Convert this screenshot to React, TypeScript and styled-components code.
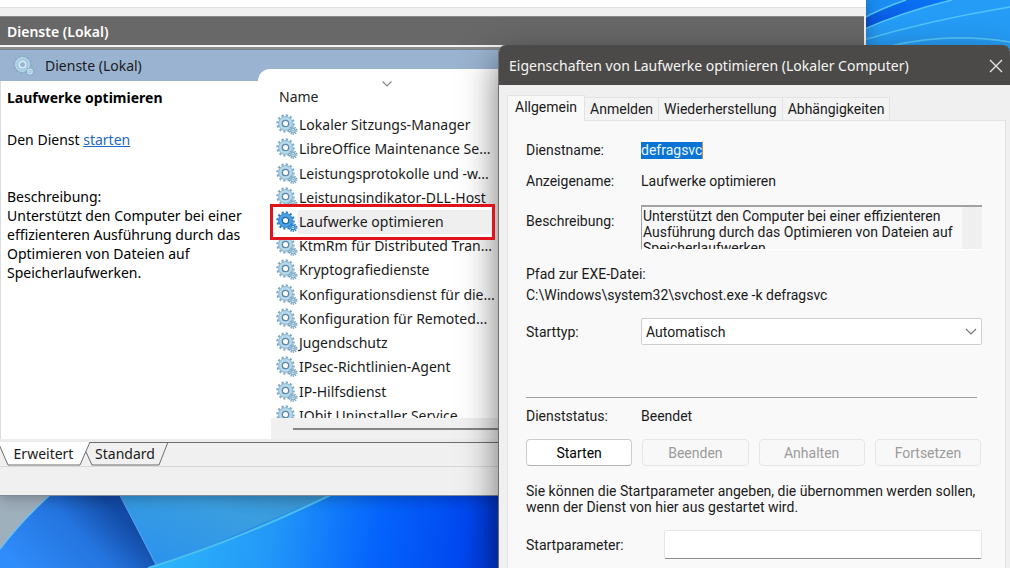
import React from 'react';
import styled, { createGlobalStyle } from 'styled-components';

const UI_FONT = '"Noto Sans", "Open Sans", sans-serif';
const DIALOG_FONT = 'Roboto, "Liberation Sans", sans-serif';

const GlobalStyle = createGlobalStyle`
  *, *::before, *::after { box-sizing: border-box; }
  body { margin: 0; font: 400 14px/20px ${UI_FONT}; color: #1a1a1a; }
  h1, h2, p, ul { margin: 0; padding: 0; font-size: 14px; }
  ul { list-style: none; }
  button, input, select, textarea { font: inherit; color: inherit; margin: 0; }
`;

const Desktop = styled.main`
  position: relative;
  min-height: 100vh;
  overflow: hidden;
  background: #2a8fe8;
`;

const WallpaperArt = styled.svg`
  position: absolute;
  inset: 0;
  width: 100%;
  height: 100%;
`;

/* ---------- services console ---------- */

const Console = styled.section`
  position: relative;
  margin-right: 144px;
  background: #f0f0f0;
  border-bottom: 1px solid #7f8a94;
  box-shadow: 0 2px 14px rgba(0, 0, 0, 0.3);
`;

const Toolbar = styled.div`
  height: 16px;
  border-top: 7px solid #fff;
  background: linear-gradient(#e0e0e0 1px, #f0f0f0 1px);
`;

const ConsoleTitle = styled.h1`
  margin-right: 2px;
  padding: 5px 7px 3px;
  border-top: 1px solid #8a8a8a;
  background: #686868;
  color: #fff;
  line-height: 20px;
  font-weight: 600;
`;

const Divider = styled.div`
  height: 5px;
  border-top: 2px solid #f4f4f4;
  border-bottom: 1px solid #7c8792;
  background: #8c8c88;
`;

const Panes = styled.div`
  display: grid;
  grid-template-columns: 258px 1fr;
  background: #9ab3d0;
`;

const InfoPane = styled.div`
  display: flex;
  flex-direction: column;
`;

const InfoHeader = styled.div`
  display: flex;
  align-items: center;
  gap: 10px;
  height: 31px;
  padding-left: 13px;
`;

const InfoBody = styled.div`
  display: flex;
  flex-direction: column;
  gap: 23px;
  flex: 1;
  padding: 7px 6px;
  border-left: 1px solid #dcdcdc;
  background: #fff;
  color: #000;
  line-height: 19px;
  white-space: nowrap;
`;

const InfoName = styled.h2`
  line-height: 19px;
  font-weight: 700;
`;

const Description = styled.p`
  margin-top: 15px;
`;

const StartLink = styled.a`
  color: #1c68c4;
`;

const ListPane = styled.div`
  margin-top: 19px;
  border-top-left-radius: 12px;
  background: #fff;
`;

const ColumnHeader = styled.div`
  display: flex;
  flex-direction: column;
  height: 44px;
  padding: 12px 0 0 21px;
  color: #222;
`;

const SortMark = styled.svg`
  width: 10px;
  height: 6px;
  margin-left: 103px;
`;

const ListViewport = styled.div`
  height: 305px;
  padding-left: 18px;
  overflow: hidden;
`;

const ServiceList = styled.ul`
  display: grid;
  grid-auto-rows: 1fr;
  width: 222px;
  height: 315px;
`;

const ServiceRow = styled.li<{ $selected?: boolean }>`
  position: relative;
  z-index: ${(p) => (p.$selected ? 1 : 0)};
  display: flex;
  align-items: center;
  white-space: nowrap;
`;

const ServiceName = styled.span<{ $selected?: boolean }>`
  flex: 1;
  margin-right: ${(p) => (p.$selected ? 6 : 0)}px;
  padding: 2px 1px;
  background: ${(p) => (p.$selected ? '#efefef' : 'transparent')};
`;

const Marker = styled.span`
  position: absolute;
  z-index: -1;
  inset: -6px 3px -6px -6px;
  border: 4px double #e0141c;
  border-style: solid;
  border-width: 3px;
  background: #fff;
`;

const ScrollTrack = styled.div`
  height: 21px;
  margin-left: 13px;
  padding: 10px 0 0 22px;
  background: #f0f0f0;
`;

const ScrollThumb = styled.div`
  height: 2px;
  background: #858585;
`;

const TabStrip = styled.div`
  display: flex;
  height: 28px;
  border-top: 3px solid #ececec;
  border-bottom: 1px solid #d9d9d9;
  background: linear-gradient(#6d6d6d 1px, #f0f0f0 1px);
`;

const ViewTab = styled.button<{ $width: number }>`
  position: relative;
  width: ${(p) => p.$width}px;
  height: 24px;
  margin-right: -6px;
  padding: 0 4px 0 0;
  border: 0;
  background: none;
`;

const TabShape = styled.svg`
  position: absolute;
  inset: 0;
`;

const TabText = styled.span`
  position: relative;
`;

const StatusBar = styled.div`
  height: 28px;
`;

/* ---------- properties dialog ---------- */

const Dialog = styled.section`
  position: absolute;
  top: 45px;
  right: 0;
  bottom: 0;
  left: 498px;
  border-left: 1px solid #6f6f6f;
  border-radius: 8px 8px 0 0;
  background: #f0f0f0;
  box-shadow: 0 14px 36px rgba(0, 0, 0, 0.55);
  font-family: ${DIALOG_FONT};
`;

const TitleBar = styled.header`
  display: flex;
  align-items: center;
  justify-content: space-between;
  height: 40px;
  padding: 2px 7px 0 10px;
  border-radius: 7px 7px 0 0;
  background: #4b4a48;
  color: #f5f5f5;
  font-family: ${UI_FONT};
  white-space: nowrap;
`;

const CloseButton = styled.button`
  display: flex;
  padding: 0;
  border: 0;
  background: none;
`;

const DialogTabs = styled.div`
  display: flex;
  align-items: flex-end;
  height: 35px;
  padding-left: 8px;
`;

const DialogTab = styled.button<{ $active?: boolean }>`
  position: relative;
  height: ${(p) => (p.$active ? 26 : 23)}px;
  margin-bottom: ${(p) => (p.$active ? -1 : 0)}px;
  padding: 0 ${(p) => (p.$active ? 7 : 5)}px ${(p) => (p.$active ? 3 : 0)}px;
  border: 1px solid #e3e3e3;
  border-left-width: ${(p) => (p.$active ? 1 : 0)}px;
  border-bottom: 0;
  background: ${(p) => (p.$active ? '#f9f9f9' : '#f3f3f3')};
`;

const TabPanel = styled.form`
  display: flex;
  flex-direction: column;
  margin: 0 4px 0 8px;
  height: calc(100% - 75px);
  padding: 19px 23px 0 18px;
  border: 1px solid #e3e3e3;
  border-bottom: 0;
  background: #f9f9f9;
`;

const Field = styled.div<{ $top?: number; $label?: number; $start?: boolean }>`
  display: grid;
  grid-template-columns: ${(p) => p.$label || 115}px 1fr;
  align-items: ${(p) => (p.$start ? 'start' : 'center')};
  margin-top: ${(p) => p.$top || 0}px;
`;

const DescriptionLabel = styled.label`
  padding-top: 6px;
`;

const PlainInput = styled.input<{ $marked?: boolean }>`
  justify-self: start;
  field-sizing: content;
  height: ${(p) => (p.$marked ? 17 : 20)}px;
  padding: 0;
  border: 0;
  border-right: ${(p) => (p.$marked ? '1px solid #d08840' : '0')};
  background: ${(p) => (p.$marked ? '#0a74d4' : 'transparent')};
  color: ${(p) => (p.$marked ? '#e8f4ff' : 'inherit')};
  outline: 0;
`;

const DescriptionBox = styled.div`
  display: grid;
  grid-template-columns: 1fr 20px;
  height: 45px;
  border-top: 2px solid #a2a2a2;
  border-left: 1px solid #a2a2a2;
  border-bottom: 1px solid #fff;
`;

const DescriptionText = styled.textarea`
  height: 42px;
  padding: 1px 0 0 1px;
  border: 0;
  background: transparent;
  line-height: 16px;
  white-space: pre;
  overflow: hidden;
  resize: none;
  outline: 0;
`;

const ScrollGutter = styled.div`
  background: #efefef;
`;

const PathBlock = styled.div`
  margin-top: 14px;
  line-height: 21px;
`;

const SelectBox = styled.div`
  display: grid;
  align-items: center;

  & > * { grid-area: 1 / 1; }
`;

const TypeSelect = styled.select`
  appearance: none;
  width: 100%;
  height: 27px;
  padding: 0 4px;
  border: 1px solid #cfcfcf;
  border-radius: 2px;
  background: #fff;
`;

const SelectArrow = styled.svg`
  justify-self: end;
  margin-right: 5px;
  pointer-events: none;
`;

const Rule = styled.hr`
  width: calc(100% - 5px);
  margin: 52px 5px 8px 0;
  border: 0;
  border-top: 1px solid #a0a0a0;
`;

const ButtonRow = styled.div`
  display: grid;
  grid-template-columns: repeat(4, 1fr);
  gap: 10px;
  margin: 13px 1px 0 0;
`;

const ActionButton = styled.button`
  height: 27px;
  border: 1px solid #cccccc;
  border-bottom-color: #b4b4b4;
  border-radius: 4px;
  background: #fff;
  color: #000;

  &:disabled {
    border-color: #e6e6e6;
    background: #f8f8f8;
    color: #9b9b9b;
  }
`;

const Hint = styled.p`
  margin-top: 17px;
  line-height: 16px;
  white-space: nowrap;
`;

const ParameterInput = styled.input`
  width: 100%;
  height: 29px;
  padding: 0 5px;
  border: 1px solid #e6e6e6;
  border-bottom: 1px solid #8c8c8c;
  border-radius: 2px;
  background: #fff;
`;

/* ---------- drawings ---------- */

function GearIcon({ tone = 'normal' }: { tone?: 'normal' | 'active' | 'pale' }) {
  const c = {
    normal: { teeth: '#7ea7c1', fill: '#b5d9ec', edge: '#80adc8', hub: '#5f86a2' },
    active: { teeth: '#2a7cc4', fill: '#4ba3e4', edge: '#2a80c8', hub: '#1d66a8' },
    pale: { teeth: '#86a9c4', fill: '#a9cbe0', edge: '#bde4f2', hub: '#d4f2fa' },
  }[tone];
  return (
    <svg width="22" height="22" viewBox="0 0 22 22" aria-hidden="true">
      <circle cx="9.5" cy="9.5" r="8" fill="none" stroke={c.teeth} strokeWidth="2.4" strokeDasharray="2.1 2.09" />
      <circle cx="9.5" cy="9.5" r="5.3" fill="none" stroke={c.fill} strokeWidth="4" />
      <circle cx="9.5" cy="9.5" r="6.9" fill="none" stroke={c.edge} strokeWidth="0.8" />
      <circle cx="9.5" cy="9.5" r="3.2" fill={tone === 'pale' ? '#9ab3d0' : '#fff'} stroke={c.hub} strokeWidth="1.3" />
      <circle cx="17" cy="16.5" r="3.7" fill="none" stroke={c.teeth} strokeWidth="1.6" strokeDasharray="1.3 1.02" />
      <circle cx="17" cy="16.5" r="2.2" fill={tone === 'pale' ? '#9ab3d0' : '#e4f2fa'} stroke={c.edge} strokeWidth="1.4" />
      <circle cx="17" cy="16.5" r="0.7" fill={c.hub} />
    </svg>
  );
}

function Wallpaper() {
  return (
    <WallpaperArt viewBox="0 0 1010 568" preserveAspectRatio="none" aria-hidden="true">
      <defs>
        <linearGradient id="petal" x1="0" y1="0.8" x2="1" y2="0.3">
          <stop offset="0" stopColor="#2f8dfb" />
          <stop offset="0.5" stopColor="#2474de" />
          <stop offset="0.8" stopColor="#134ba6" />
          <stop offset="1" stopColor="#1446ae" />
        </linearGradient>
        <linearGradient id="middle" x1="0" y1="1" x2="1" y2="0">
          <stop offset="0" stopColor="#2790f0" />
          <stop offset="0.6" stopColor="#3a9ee0" />
          <stop offset="1" stopColor="#3a90cc" />
        </linearGradient>
        <linearGradient id="deep" gradientUnits="userSpaceOnUse" x1="170" y1="520" x2="510" y2="568">
          <stop offset="0" stopColor="#2cb4fa" />
          <stop offset="0.3" stopColor="#2298f8" />
          <stop offset="0.6" stopColor="#0564fc" />
          <stop offset="0.85" stopColor="#0048f0" />
          <stop offset="1" stopColor="#0030c8" />
        </linearGradient>
        <linearGradient id="fold" x1="0" y1="1" x2="1" y2="0">
          <stop offset="0" stopColor="#0a50d8" />
          <stop offset="1" stopColor="#0a78fa" />
        </linearGradient>
      </defs>
      <path d="M0 490H60V568H0z" fill="#9fb0bd" />
      <path d="M58 488Q26 515 0 549V568H157L116 488z" fill="url(#petal)" />
      <path d="M58 488Q26 515 0 549" fill="none" stroke="#6cc0f0" strokeWidth="1.5" />
      <path d="M116 488L157 568L345 488z" fill="url(#middle)" />
      <path d="M116 488L156 564" stroke="#5a9ee4" strokeWidth="1" />
      <path d="M148 568Q240 540 345 488H510V568z" fill="url(#deep)" />
      <path d="M148 568Q240 540 345 488" fill="none" stroke="#4cc0ee" strokeWidth="2" />
      <path d="M860 0H1010V60H860z" fill="#259cf6" />
      <path d="M860 0H906L860 20z" fill="#1b8cf2" />
      <path d="M860 20Q882 8 906 0H952Q902 12 860 31z" fill="url(#fold)" />
      <g fill="none" stroke="#52c4fa" strokeWidth="1.6">
        <path d="M860 20Q882 8 906 0" />
        <path d="M860 31Q902 12 952 0" />
        <path d="M860 41Q930 20 1010 7" />
        <path d="M890 46Q950 32 1010 42" />
      </g>
    </WallpaperArt>
  );
}

const services = [
  'Lokaler Sitzungs-Manager',
  'LibreOffice Maintenance Se...',
  'Leistungsprotokolle und -w...',
  'Leistungsindikator-DLL-Host',
  'Laufwerke optimieren',
  'KtmRm für Distributed Tran...',
  'Kryptografiedienste',
  'Konfigurationsdienst für die...',
  'Konfiguration für Remoted...',
  'Jugendschutz',
  'IPsec-Richtlinien-Agent',
  'IP-Hilfsdienst',
  'IObit Uninstaller Service',
];

const selectedService = 'Laufwerke optimieren';

export default function App() {
  return (
    <Desktop>
      <GlobalStyle />
      <Wallpaper />

      <Console>
        <Toolbar />
        <ConsoleTitle>Dienste (Lokal)</ConsoleTitle>
        <Divider />
        <Panes>
          <InfoPane>
            <InfoHeader>
              <GearIcon tone="pale" />
              Dienste (Lokal)
            </InfoHeader>
            <InfoBody>
              <InfoName>Laufwerke optimieren</InfoName>
              <p>
                Den Dienst <StartLink href="#starten">starten</StartLink>
              </p>
              <Description>
                Beschreibung:
                <br />
                Unterstützt den Computer bei einer
                <br />
                effizienteren Ausführung durch das
                <br />
                Optimieren von Dateien auf
                <br />
                Speicherlaufwerken.
              </Description>
            </InfoBody>
          </InfoPane>
          <ListPane>
            <ColumnHeader>
              <SortMark viewBox="0 0 10 6" aria-hidden="true">
                <path d="M0.5 0.5L5 5L9.5 0.5" fill="none" stroke="#8a8a8a" strokeWidth="1.2" />
              </SortMark>
              Name
            </ColumnHeader>
            <ListViewport>
              <ServiceList>
                {services.map((name) => {
                  const selected = name === selectedService;
                  return (
                    <ServiceRow key={name} $selected={selected}>
                      {selected && <Marker />}
                      <GearIcon tone={selected ? 'active' : 'normal'} />
                      <ServiceName $selected={selected}>{name}</ServiceName>
                    </ServiceRow>
                  );
                })}
              </ServiceList>
            </ListViewport>
            <ScrollTrack>
              <ScrollThumb />
            </ScrollTrack>
          </ListPane>
        </Panes>
        <TabStrip>
          <ViewTab type="button" $width={91}>
            <TabShape width="91" height="24" viewBox="0 0 91 24" aria-hidden="true">
              <path d="M-2 0L8 23H80L90 0z" fill="#fff" />
              <path d="M-2 0L8 23H80L90 0" fill="none" stroke="#6d6d6d" />
            </TabShape>
            <TabText>Erweitert</TabText>
          </ViewTab>
          <ViewTab type="button" $width={84}>
            <TabShape width="84" height="24" viewBox="0 0 84 24" aria-hidden="true">
              <path d="M1 10L7 23H74L83 0" fill="none" stroke="#6d6d6d" />
            </TabShape>
            <TabText>Standard</TabText>
          </ViewTab>
        </TabStrip>
        <StatusBar />
      </Console>

      <Dialog role="dialog" aria-labelledby="dialog-title">
        <TitleBar>
          <span id="dialog-title">Eigenschaften von Laufwerke optimieren (Lokaler Computer)</span>
          <CloseButton type="button" aria-label="Schließen">
            <svg width="14" height="14" viewBox="0 0 14 14" aria-hidden="true">
              <path d="M1 1L13 13M13 1L1 13" stroke="#e8e8e8" strokeWidth="1.3" />
            </svg>
          </CloseButton>
        </TitleBar>
        <DialogTabs>
          <DialogTab type="button" $active>Allgemein</DialogTab>
          <DialogTab type="button">Anmelden</DialogTab>
          <DialogTab type="button">Wiederherstellung</DialogTab>
          <DialogTab type="button">Abhängigkeiten</DialogTab>
        </DialogTabs>
        <TabPanel>
          <Field>
            <label htmlFor="service-name">Dienstname:</label>
            <PlainInput id="service-name" readOnly $marked value="defragsvc" />
          </Field>
          <Field $top={11}>
            <label htmlFor="display-name">Anzeigename:</label>
            <PlainInput id="display-name" readOnly value="Laufwerke optimieren" />
          </Field>
          <Field $top={14} $start>
            <DescriptionLabel htmlFor="description">Beschreibung:</DescriptionLabel>
            <DescriptionBox>
              <DescriptionText
                id="description"
                readOnly
                value={'Unterstützt den Computer bei einer effizienteren\nAusführung durch das Optimieren von Dateien auf\nSpeicherlaufwerken.'}
              />
              <ScrollGutter />
            </DescriptionBox>
          </Field>
          <PathBlock>
            <p>Pfad zur EXE-Datei:</p>
            <p>C:\Windows\system32\svchost.exe -k defragsvc</p>
          </PathBlock>
          <Field $top={12}>
            <label htmlFor="start-type">Starttyp:</label>
            <SelectBox>
              <TypeSelect id="start-type" defaultValue="Automatisch">
                <option>Automatisch</option>
                <option>Manuell</option>
                <option>Deaktiviert</option>
              </TypeSelect>
              <SelectArrow width="12" height="7" viewBox="0 0 12 7" aria-hidden="true">
                <path d="M1 1L6 6L11 1" fill="none" stroke="#777" strokeWidth="1.2" />
              </SelectArrow>
            </SelectBox>
          </Field>
          <Rule />
          <Field>
            <span>Dienststatus:</span>
            <span>Beendet</span>
          </Field>
          <ButtonRow>
            <ActionButton type="button">Starten</ActionButton>
            <ActionButton type="button" disabled>Beenden</ActionButton>
            <ActionButton type="button" disabled>Anhalten</ActionButton>
            <ActionButton type="button" disabled>Fortsetzen</ActionButton>
          </ButtonRow>
          <Hint>
            Sie können die Startparameter angeben, die übernommen werden sollen,
            <br />
            wenn der Dienst von hier aus gestartet wird.
          </Hint>
          <Field $top={15} $label={138}>
            <label htmlFor="start-parameters">Startparameter:</label>
            <ParameterInput id="start-parameters" type="text" />
          </Field>
        </TabPanel>
      </Dialog>
    </Desktop>
  );
}
